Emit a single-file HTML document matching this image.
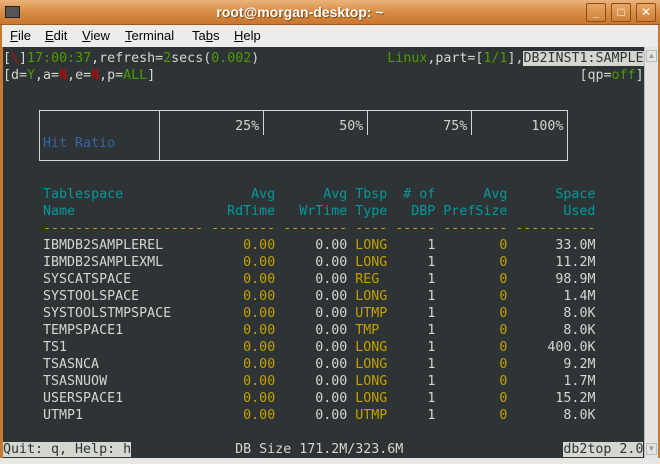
<!DOCTYPE html>
<html><head><meta charset="utf-8"><style>
*{margin:0;padding:0;box-sizing:border-box}
body{width:660px;height:464px;overflow:hidden;background:#c27a35;position:relative;font-family:"Liberation Sans","DejaVu Sans",sans-serif}
#title{position:absolute;left:0;top:0;width:660px;height:25px;background:linear-gradient(#eab47a,#d88c45 50%,#c9772f);border-bottom:1px solid #9c5a1e}
#title .t{position:absolute;left:0;width:600px;top:4px;text-align:center;color:#fff;font-weight:bold;font-size:14px;text-shadow:1px 1px 1px #7a4515}
.btn{position:absolute;top:3px;width:20px;height:19px;border:1px solid #8a4f1a;border-radius:2px;background:linear-gradient(#e9a765,#cf8039);color:#fff;font-size:12px;text-align:center;line-height:17px;font-weight:bold}
#icon{position:absolute;left:5px;top:6px;width:15px;height:12px;background:#555;border:1px solid #222}
#menu{position:absolute;left:2px;top:25px;width:656px;height:22px;background:#edecea;font-size:13px;color:#000}
#menu span{position:absolute;top:3px}
#term{position:absolute;left:3px;top:47px;width:641px;height:411px;background:#2e3436}
#sb{position:absolute;left:644px;top:47px;width:14px;height:411px;background:#e6e4e1;border-left:1px solid #bbb}
pre{position:absolute;left:3px;top:50px;font-family:"DejaVu Sans Mono","Liberation Mono",monospace;font-size:13.3px;line-height:17px;color:#d3d7cf}
.g{color:#4e9a06}.r{color:#cc0000}.c{color:#06989a}.y{color:#c4a000}.b{color:#3465a4}.h{background:#d3d7cf;color:#2e3436}
.ln{position:absolute;background:#d3d7cf}
#bot{position:absolute;left:0;top:458px;width:660px;height:6px;background:#e9e7e3}
</style></head><body>
<div id="title"><div id="icon"></div><div class="t">root@morgan-desktop: ~</div>
<div class="btn" style="left:586px">_</div><div class="btn" style="left:611px">□</div><div class="btn" style="left:636px">✕</div></div>
<div id="menu"><span style="left:8px"><u>F</u>ile</span><span style="left:43px"><u>E</u>dit</span><span style="left:80px"><u>V</u>iew</span><span style="left:123px"><u>T</u>erminal</span><span style="left:190px">Ta<u>b</u>s</span><span style="left:232px"><u>H</u>elp</span></div>
<div id="term"></div>
<div id="sb"><div style="margin:3px 1px;height:12px;border:1px solid #bbb;font-size:8px;color:#999;text-align:center;line-height:10px">▲</div><div style="position:absolute;bottom:3px;left:1px;width:11px;height:12px;border:1px solid #bbb;font-size:8px;color:#999;text-align:center;line-height:10px">▼</div></div>
<div class="ln" style="left:39px;top:110px;width:529px;height:1px"></div>
<div class="ln" style="left:39px;top:160px;width:529px;height:1px"></div>
<div class="ln" style="left:39px;top:110px;width:1px;height:51px"></div>
<div class="ln" style="left:567px;top:110px;width:1px;height:51px"></div>
<div class="ln" style="left:159px;top:110px;width:1px;height:51px"></div>
<div class="ln" style="left:263px;top:110px;width:1px;height:25px"></div>
<div class="ln" style="left:367px;top:110px;width:1px;height:25px"></div>
<div class="ln" style="left:471px;top:110px;width:1px;height:25px"></div>
<pre>[<span class="r">\</span>]<span class="g">17:00:37</span>,refresh=<span class="g">2</span>secs(<span class="g">0.002</span>)                <span class="g">Linux</span>,part=[<span class="g">1/1</span>],<span class="h">DB2INST1:SAMPLE</span>
[d=<span class="g">Y</span>,a=<span class="r">N</span>,e=<span class="r">N</span>,p=<span class="g">ALL</span>]                                                     [qp=<span class="g">off</span>]


                             25%          50%          75%        100%
     <span class="b">Hit Ratio</span>


     <span class="c">Tablespace                Avg      Avg Tbsp  # of      Avg      Space</span>
     <span class="c">Name                   RdTime   WrTime Type   DBP PrefSize       Used</span>
     <span class="y">-------------------- -------- -------- ---- ----- -------- ----------</span>
     IBMDB2SAMPLEREL          <span class="y">0.00</span>     0.00 <span class="y">LONG</span>     1        <span class="y">0</span>      33.0M
     IBMDB2SAMPLEXML          <span class="y">0.00</span>     0.00 <span class="y">LONG</span>     1        <span class="y">0</span>      11.2M
     SYSCATSPACE              <span class="y">0.00</span>     0.00 <span class="y">REG </span>     1        <span class="y">0</span>      98.9M
     SYSTOOLSPACE             <span class="y">0.00</span>     0.00 <span class="y">LONG</span>     1        <span class="y">0</span>       1.4M
     SYSTOOLSTMPSPACE         <span class="y">0.00</span>     0.00 <span class="y">UTMP</span>     1        <span class="y">0</span>       8.0K
     TEMPSPACE1               <span class="y">0.00</span>     0.00 <span class="y">TMP </span>     1        <span class="y">0</span>       8.0K
     TS1                      <span class="y">0.00</span>     0.00 <span class="y">LONG</span>     1        <span class="y">0</span>     400.0K
     TSASNCA                  <span class="y">0.00</span>     0.00 <span class="y">LONG</span>     1        <span class="y">0</span>       9.2M
     TSASNUOW                 <span class="y">0.00</span>     0.00 <span class="y">LONG</span>     1        <span class="y">0</span>       1.7M
     USERSPACE1               <span class="y">0.00</span>     0.00 <span class="y">LONG</span>     1        <span class="y">0</span>      15.2M
     UTMP1                    <span class="y">0.00</span>     0.00 <span class="y">UTMP</span>     1        <span class="y">0</span>       8.0K

<span class="h">Quit: q, Help: h</span>             DB Size 171.2M/323.6M                    <span class="h">db2top 2.0</span></pre>
<div id="bot"></div>
</body></html>
